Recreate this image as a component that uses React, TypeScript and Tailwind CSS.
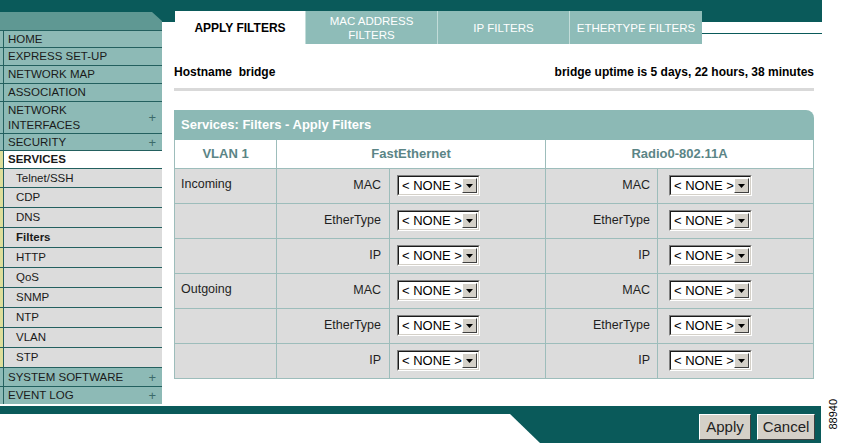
type MenuItem = {
  label: string;
  kind: 'main' | 'active' | 'sub' | 'subActive';
  h: string;
  plus?: boolean;
  lines?: string[];
};

const menu: MenuItem[] = [
  { label: 'HOME', kind: 'main', h: 'h-[16px]' },
  { label: 'EXPRESS SET-UP', kind: 'main', h: 'h-[17px]' },
  { label: 'NETWORK MAP', kind: 'main', h: 'h-[17px]' },
  { label: 'ASSOCIATION', kind: 'main', h: 'h-[17px]' },
  { label: 'NETWORK INTERFACES', kind: 'main', h: 'h-[31px]', plus: true, lines: ['NETWORK', 'INTERFACES'] },
  { label: 'SECURITY', kind: 'main', h: 'h-[16px]', plus: true },
  { label: 'SERVICES', kind: 'active', h: 'h-[17px]' },
  { label: 'Telnet/SSH', kind: 'sub', h: 'h-[18px]' },
  { label: 'CDP', kind: 'sub', h: 'h-[19px]' },
  { label: 'DNS', kind: 'sub', h: 'h-[19px]' },
  { label: 'Filters', kind: 'subActive', h: 'h-[19px]' },
  { label: 'HTTP', kind: 'sub', h: 'h-[19px]' },
  { label: 'QoS', kind: 'sub', h: 'h-[19px]' },
  { label: 'SNMP', kind: 'sub', h: 'h-[19px]' },
  { label: 'NTP', kind: 'sub', h: 'h-[19px]' },
  { label: 'VLAN', kind: 'sub', h: 'h-[19px]' },
  { label: 'STP', kind: 'sub', h: 'h-[19px]' },
  { label: 'SYSTEM SOFTWARE', kind: 'main', h: 'h-[18px]', plus: true },
  { label: 'EVENT LOG', kind: 'main', h: 'h-[17px]', plus: true },
];

const rows = [
  { dir: 'Incoming', filter: 'MAC' },
  { dir: '', filter: 'EtherType' },
  { dir: '', filter: 'IP' },
  { dir: 'Outgoing', filter: 'MAC' },
  { dir: '', filter: 'EtherType' },
  { dir: '', filter: 'IP' },
];

function Sidebar() {
  return (
    <div className="w-[162px] shrink-0 h-[406px] flex flex-col bg-white">
      <div className="h-[12px] bg-[#0a5a5a]" />
      <div className="h-[18px] bg-[#0a5a5a]">
        <div className="h-full bg-[#5f9893] [clip-path:polygon(0_0,152px_0,100%_9px,100%_100%,0_100%)]" />
      </div>
      {menu.map((m) => {
        const teal = m.kind === 'main';
        const bg =
          m.kind === 'main' ? 'bg-[#8dbab6]' : m.kind === 'active' ? 'bg-white' : 'bg-[#dcdcdc]';
        return (
          <div key={m.label} className={`flex border-t border-[#23605f] ${bg}`}>
            <div
              className={`w-[4px] border-r border-[#23605f] ${teal ? 'bg-[#8dbab6]' : 'bg-[#dede9a]'}`}
            />
            <div
              className={`${m.h} flex-1 flex items-center justify-between pr-[6px] text-[11.5px] leading-[15px] text-[#1a1a1a] ${
                m.kind === 'sub' || m.kind === 'subActive' ? 'pl-[12px]' : 'pl-[4px]'
              } ${m.kind === 'active' || m.kind === 'subActive' ? 'font-bold' : ''}`}
            >
              <span>
                {m.lines ? (
                  <>
                    {m.lines[0]}
                    <br />
                    {m.lines[1]}
                  </>
                ) : (
                  m.label
                )}
              </span>
              {m.plus && <span className="text-[13px] text-[#3c6b6a]">+</span>}
            </div>
          </div>
        );
      })}
    </div>
  );
}

function NoneSelect() {
  return (
    <div className="w-[83px] h-[21px] border-t border-l border-[#808080] border-b border-r border-b-white border-r-white">
      <div className="h-full flex bg-white border-t border-l border-[#1a1a1a] border-b border-r border-b-[#d4d0c8] border-r-[#d4d0c8]">
        <div className="flex-1 flex items-center pl-[3px] text-[13px] leading-none text-black">&lt; NONE &gt;</div>
        <div className="w-[15px] my-[1px] mr-[1px] bg-[#d4d0c8] border border-t-white border-l-white border-b-[#404040] border-r-[#404040] flex items-center justify-center">
          <svg width="7" height="4" viewBox="0 0 7 4">
            <path d="M0 0h7L3.5 4z" fill="#000" />
          </svg>
        </div>
      </div>
    </div>
  );
}

function FilterTable() {
  const cell = 'border border-[#9dbdbb]';
  return (
    <div>
      <div className="h-[30px] bg-[#8cb9b5] rounded-tr-[8px] flex items-center pl-[7px] text-[13px] font-bold text-white">
        Services: Filters - Apply Filters
      </div>
      <table className="w-[639px] border-collapse table-fixed">
        <colgroup>
          <col className="w-[102px]" />
          <col className="w-[113px]" />
          <col className="w-[156px]" />
          <col className="w-[112px]" />
          <col className="w-[156px]" />
        </colgroup>
        <thead>
          <tr className="h-[28px] bg-white text-[13px] font-bold text-[#5b8586]">
            <th className={`${cell} border-t-0`}>VLAN 1</th>
            <th className={`${cell} border-t-0`} colSpan={2}>
              FastEthernet
            </th>
            <th className={`${cell} border-t-0`} colSpan={2}>
              Radio0-802.11A
            </th>
          </tr>
        </thead>
        <tbody className="bg-[#dcdcdc] text-[12.5px] text-[#1f1f1f]">
          {rows.map((r, i) => (
            <tr key={i} className="h-[35px]">
              <td className={`${cell} align-top pt-[6px] pl-[6px]`}>{r.dir}</td>
              <td className={`${cell} text-right pr-[8px]`}>{r.filter}</td>
              <td className={`${cell} pl-[7px]`}>
                <NoneSelect />
              </td>
              <td className={`${cell} text-right pr-[7px]`}>{r.filter}</td>
              <td className={`${cell} pl-[11px]`}>
                <NoneSelect />
              </td>
            </tr>
          ))}
        </tbody>
      </table>
    </div>
  );
}

function Tabs() {
  const inactive =
    'h-[33px] bg-[#8ebcb8] border-l border-[#c2dcd9] text-white text-[11.5px] leading-[14px] flex items-center justify-center text-center';
  return (
    <div className="h-[45px] flex items-start pt-[11px] pl-[13px] bg-[linear-gradient(to_bottom,#0a5a5a_22px,#ffffff_22px)]">
      <div className="w-[130px] h-[34px] bg-white flex items-center justify-center text-[12px] font-bold text-black pb-[1px]">
        APPLY FILTERS
      </div>
      <div className={`w-[132px] ${inactive}`}>
        MAC ADDRESS
        <br />
        FILTERS
      </div>
      <div className={`w-[132px] ${inactive}`}>IP FILTERS</div>
      <div className={`w-[133px] ${inactive}`}>ETHERTYPE FILTERS</div>
      <div className="flex-1 h-[34px] mt-[-11px] pt-[11px]">
        <div className="h-full bg-[linear-gradient(to_bottom,#0a5a5a_11px,#ffffff_11px)] border-b border-[#0a5a5a]" />
      </div>
    </div>
  );
}

function Footer() {
  return (
    <div className="h-[37px] w-[821px] flex">
      <div className="flex-1">
        <div className="h-[8px] bg-[#0a5a5a]" />
      </div>
      <div className="w-[30px] bg-[#0a5a5a] [clip-path:polygon(0_0,100%_0,100%_100%,0_8px)]" />
      <div className="w-[281px] bg-[#0a5a5a] flex justify-end items-start pt-[8px] pr-[6px] gap-[6px]">
        <button className="h-[26px] w-[52px] bg-[#d4d0c8] border border-t-white border-l-white border-r-[#404040] border-b-[#404040] text-[15px] text-[#222]">
          Apply
        </button>
        <button className="h-[26px] w-[58px] bg-[#d4d0c8] border border-t-white border-l-white border-r-[#404040] border-b-[#404040] text-[15px] text-[#222]">
          Cancel
        </button>
      </div>
    </div>
  );
}

export default function App() {
  return (
    <div className="relative w-[842px] h-[443px] bg-white overflow-hidden font-['Liberation_Sans',Arial,sans-serif]">
      <div className="flex w-[821px] h-[406px]">
        <Sidebar />
        <div className="flex-1 flex flex-col">
          <Tabs />
          <div className="pl-[12px] pr-[8px]">
            <div className="pt-[19px] flex justify-between text-[12px] font-bold leading-[16px] text-black">
              <span className="whitespace-pre">Hostname  bridge</span>
              <span>bridge uptime is 5 days, 22 hours, 38 minutes</span>
            </div>
            <div className="mt-[8px] h-[3px] bg-[#d9d9d9]" />
            <div className="mt-[19px]">
              <FilterTable />
            </div>
          </div>
        </div>
      </div>
      <Footer />
      <div className="absolute left-[827px] top-[399px] text-[11px] leading-[12px] text-black [writing-mode:vertical-rl] rotate-180">
        88940
      </div>
    </div>
  );
}
